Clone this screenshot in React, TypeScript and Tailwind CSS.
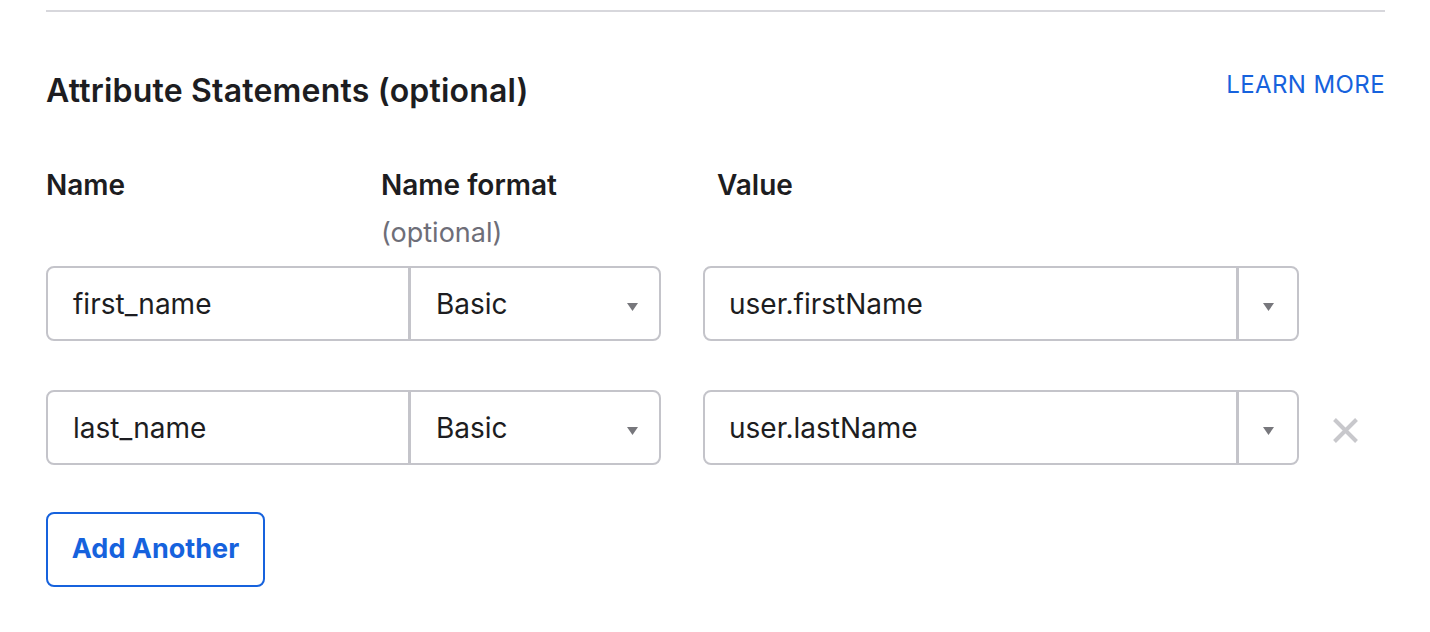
const rows = [
  { name: 'first_name', format: 'Basic', value: 'user.firstName', removable: false },
  { name: 'last_name', format: 'Basic', value: 'user.lastName', removable: true },
];

function Caret() {
  return (
    <svg width="11" height="8" viewBox="0 0 11 8" className="mt-[6px]">
      <path d="M0 0h11L5.5 8z" fill="#77777c" />
    </svg>
  );
}

export default function App() {
  return (
    <div className="w-[1430px] h-[632px] bg-white pl-[46px] pr-[45px] pt-[10px] font-['Inter',sans-serif] text-[#1d1d21]">
      {/* divider */}
      <div className="h-[2px] bg-[#d7d7dc]" />

      {/* section header */}
      <div className="mt-[59px] flex items-start justify-between">
        <h2 className="text-[32px] leading-[40px] font-semibold tracking-[0.2px]">Attribute Statements (optional)</h2>
        <a href="#" className="text-[24px] leading-[28px] tracking-[0.4px] text-[#1662dd]">
          LEARN MORE
        </a>
      </div>

      {/* column labels */}
      <div className="mt-[50px] flex text-[28px] leading-[48px]">
        <div className="w-[335px] font-semibold">Name</div>
        <div className="w-[336px]">
          <div className="font-semibold">Name format</div>
          <div className="text-[27px] text-[#6e6e78]">(optional)</div>
        </div>
        <div className="font-semibold">Value</div>
      </div>

      {/* rows */}
      <div className="mt-[9px] flex flex-col gap-[49px]">
        {rows.map((row) => (
          <div key={row.name} className="flex items-center">
            <div className="flex h-[75px] w-[615px] rounded-lg border-2 border-[#c4c4ca] text-[28px]">
              <div className="flex w-[363px] items-center border-r-[3px] border-[#c4c4ca] pl-[25px]">{row.name}</div>
              <div className="flex flex-1 items-center justify-between pl-[25px] pr-[21px]">
                <span>{row.format}</span>
                <Caret />
              </div>
            </div>
            <div className="ml-[42px] flex h-[75px] w-[596px] rounded-lg border-2 border-[#c4c4ca] text-[28px]">
              <div className="flex flex-1 items-center border-r-[3px] border-[#c4c4ca] pl-[24px]">{row.value}</div>
              <div className="flex w-[58px] items-center justify-center">
                <Caret />
              </div>
            </div>
            {row.removable && (
              <button className="ml-[34px] mt-[6px] flex h-[25px] w-[25px] items-center justify-center">
                <svg width="25" height="25" viewBox="0 0 25 25">
                  <path d="M1.5 1.5L23.5 23.5M23.5 1.5L1.5 23.5" stroke="#c8c8cc" strokeWidth="4" fill="none" />
                </svg>
              </button>
            )}
          </div>
        ))}
      </div>

      <button className="mt-[47px] h-[75px] w-[219px] rounded-lg border-2 border-[#1662dd] text-[27px] font-bold text-[#1662dd]">
        Add Another
      </button>
    </div>
  );
}
